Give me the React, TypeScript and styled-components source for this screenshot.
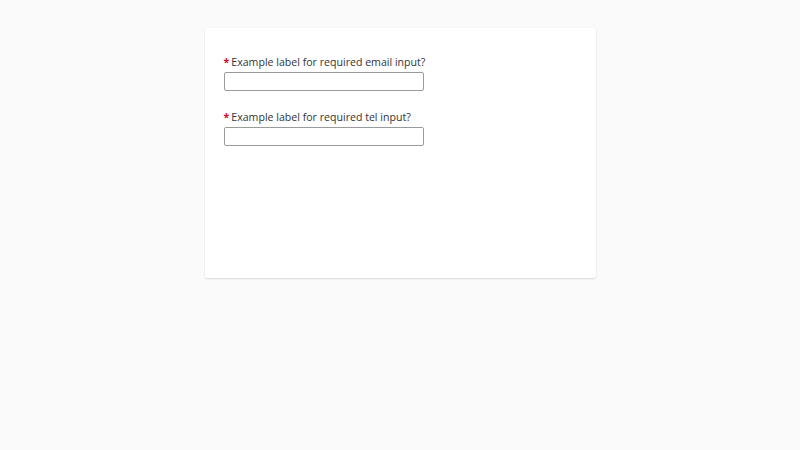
import React from 'react';
import styled, { createGlobalStyle } from 'styled-components';

const GlobalStyle = createGlobalStyle`
  html, body {
    margin: 0;
    padding: 0;
    background: #fafafa;
  }
  body {
    font-family: 'Open Sans', 'Liberation Sans', sans-serif;
  }
`;

const Page = styled.div`
  display: flex;
  justify-content: center;
  padding-top: 28px;
  min-height: 450px;
  box-sizing: border-box;
`;

const Card = styled.form`
  width: 391px;
  height: 250px;
  box-sizing: border-box;
  background: #ffffff;
  padding: 26px 19px;
  box-shadow: 0 1px 2px rgba(0, 0, 0, 0.12), 0 0 1px rgba(0, 0, 0, 0.08);
  border-radius: 2px;
  display: flex;
  flex-direction: column;
  gap: 18px;
`;

const Field = styled.div`
  display: flex;
  flex-direction: column;
  gap: 2px;
`;

const Label = styled.label`
  font-size: 10.6px;
  line-height: 16px;
  color: #333333;
`;

const Required = styled.span`
  color: #c8102e;
  font-weight: 700;
  margin-right: 2px;
`;

const Input = styled.input`
  width: 200px;
  height: 19px;
  box-sizing: border-box;
  border: 1px solid #9a9a9a;
  border-radius: 2px;
  background: #fff;
  padding: 0 4px;
  font: inherit;
  font-size: 11px;
`;

const fields = [
  { id: 'email', type: 'email', label: 'Example label for required email input?' },
  { id: 'tel', type: 'tel', label: 'Example label for required tel input?' },
];

export default () => {
  return (
    <>
      <GlobalStyle />
      <Page>
        <Card>
          {fields.map((f) => (
            <Field key={f.id}>
              <Label htmlFor={f.id}>
                <Required>*</Required>
                {f.label}
              </Label>
              <Input id={f.id} type={f.type} required />
            </Field>
          ))}
        </Card>
      </Page>
    </>
  );
};
